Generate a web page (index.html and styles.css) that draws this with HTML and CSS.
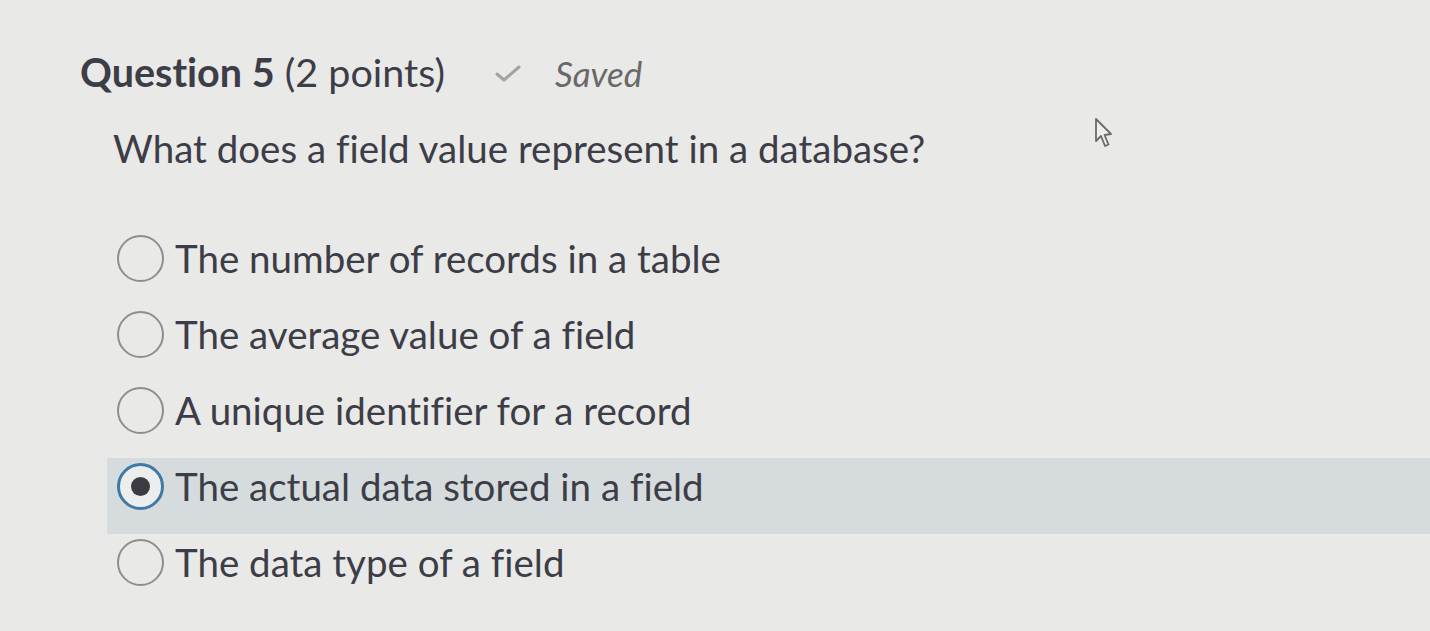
FILE: index.html
```html
<!DOCTYPE html>
<html lang="en">
<head>
  <meta charset="UTF-8" />
  <title>Question 5</title>
  <link rel="stylesheet" href="styles.css">
</head>
<body>

<!-- Question header -->
<div class="q-header">
  <h2 class="q-title"><strong>Question 5</strong> (2 points)</h2>
  <span class="saved">
    <svg class="check" viewBox="0 0 26 17" width="26" height="17">
      <path d="M2 9 L9 15 L24 2" fill="none" stroke="#a3a3a3" stroke-width="3" stroke-linecap="round" stroke-linejoin="round"/>
    </svg>
    <em>Saved</em>
  </span>
</div>

<p class="q-text">What does a field value represent in a database?</p>

<div class="answers">
  <label class="answer">
    <span class="radio"></span>
    <span class="label">The number of records in a table</span>
  </label>
  <label class="answer">
    <span class="radio"></span>
    <span class="label">The average value of a field</span>
  </label>
  <label class="answer">
    <span class="radio"></span>
    <span class="label">A unique identifier for a record</span>
  </label>
  <label class="answer selected">
    <span class="radio"></span>
    <span class="label">The actual data stored in a field</span>
  </label>
  <label class="answer">
    <span class="radio"></span>
    <span class="label">The data type of a field</span>
  </label>
</div>

<!-- mouse pointer -->
<svg class="pointer" viewBox="0 0 20 32" width="20" height="32">
  <path d="M2 2 L2 24 L7 19 L11 29 L14.5 27.5 L10.5 18 L17 17 Z" fill="#eeeeec" stroke="#6a6a6a" stroke-width="1.8" stroke-linejoin="round"/>
</svg>

</body>
</html>
```

FILE: styles.css
```css
* { box-sizing: border-box; }
body {
  margin: 0;
  font-family: Lato, 'Open Sans', sans-serif;
  font-variant-ligatures: none;
  background: #e9e9e7;
  color: #3d3d47;
  position: relative;
  height: 631px;
  overflow: hidden;
}

.q-header {
  display: flex;
  align-items: center;
  padding: 44px 0 0 80px;
}

.q-title {
  margin: 0 50px 0 0;
  font-size: 39.5px;
  font-weight: normal;
  line-height: 56px;
}

.q-title strong {
  font-weight: bold;
}

.saved {
  display: flex;
  align-items: center;
  gap: 34px;
  color: #686868;
  font-size: 35px;
  margin-top: 2px;
}

.q-text {
  margin: 24px 0 0 113px;
  font-size: 38.5px;
  line-height: 48px;
}

.answers {
  margin-top: 58px;
  padding-left: 107px;
}

.answer {
  display: flex;
  align-items: flex-start;
  gap: 11px;
  height: 76px;
  padding: 5px 0 0 10px;
  font-size: 38.5px;
}

.answer .label {
  line-height: 46px;
}

.answer.selected {
  background: #d6dcdd;
}

.radio {
  width: 47px;
  height: 47px;
  border-radius: 50%;
  border: 2px solid #8e8e8e;
  flex-shrink: 0;
  display: flex;
  align-items: center;
  justify-content: center;
}

.selected .radio {
  border: 3px solid #3f7aa6;
  background: #eceeee;
}

.selected .radio::after {
  content: "";
  width: 19px;
  height: 19px;
  border-radius: 50%;
  background: #3b3b41;
}

.pointer {
  position: absolute;
  left: 1094px;
  top: 117px;
}
```
